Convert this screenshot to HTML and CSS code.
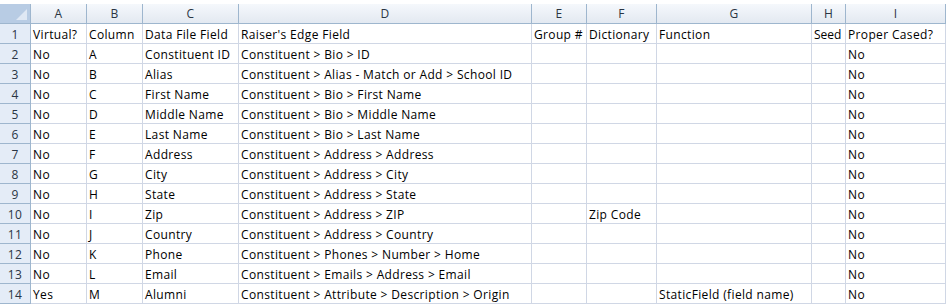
FILE: index.html
```html
<!DOCTYPE html>
<html>
<head>
<meta charset="utf-8">
<link rel="stylesheet" href="styles.css">
</head>
<body>
<div class="sheet">
  <div class="corner"><span class="tri"></span></div>
  <div class="ch">A</div><div class="ch">B</div><div class="ch">C</div><div class="ch">D</div><div class="ch">E</div><div class="ch">F</div><div class="ch">G</div><div class="ch">H</div><div class="ch">I</div>

  <div class="rh">1</div><div class="c">Virtual?</div><div class="c">Column</div><div class="c">Data File Field</div><div class="c">Raiser's Edge Field</div><div class="c">Group #</div><div class="c">Dictionary</div><div class="c">Function</div><div class="c tight">Seed</div><div class="c">Proper Cased?</div>

  <div class="rh">2</div><div class="c">No</div><div class="c">A</div><div class="c">Constituent ID</div><div class="c">Constituent &gt; Bio &gt; ID</div><div class="c"></div><div class="c"></div><div class="c"></div><div class="c"></div><div class="c">No</div>

  <div class="rh">3</div><div class="c">No</div><div class="c">B</div><div class="c">Alias</div><div class="c">Constituent &gt; Alias - Match or Add &gt; School ID</div><div class="c"></div><div class="c"></div><div class="c"></div><div class="c"></div><div class="c">No</div>

  <div class="rh">4</div><div class="c">No</div><div class="c">C</div><div class="c">First Name</div><div class="c">Constituent &gt; Bio &gt; First Name</div><div class="c"></div><div class="c"></div><div class="c"></div><div class="c"></div><div class="c">No</div>

  <div class="rh">5</div><div class="c">No</div><div class="c">D</div><div class="c">Middle Name</div><div class="c">Constituent &gt; Bio &gt; Middle Name</div><div class="c"></div><div class="c"></div><div class="c"></div><div class="c"></div><div class="c">No</div>

  <div class="rh">6</div><div class="c">No</div><div class="c">E</div><div class="c">Last Name</div><div class="c">Constituent &gt; Bio &gt; Last Name</div><div class="c"></div><div class="c"></div><div class="c"></div><div class="c"></div><div class="c">No</div>

  <div class="rh">7</div><div class="c">No</div><div class="c">F</div><div class="c">Address</div><div class="c">Constituent &gt; Address &gt; Address</div><div class="c"></div><div class="c"></div><div class="c"></div><div class="c"></div><div class="c">No</div>

  <div class="rh">8</div><div class="c">No</div><div class="c">G</div><div class="c">City</div><div class="c">Constituent &gt; Address &gt; City</div><div class="c"></div><div class="c"></div><div class="c"></div><div class="c"></div><div class="c">No</div>

  <div class="rh">9</div><div class="c">No</div><div class="c">H</div><div class="c">State</div><div class="c">Constituent &gt; Address &gt; State</div><div class="c"></div><div class="c"></div><div class="c"></div><div class="c"></div><div class="c">No</div>

  <div class="rh">10</div><div class="c">No</div><div class="c">I</div><div class="c">Zip</div><div class="c">Constituent &gt; Address &gt; ZIP</div><div class="c"></div><div class="c">Zip Code</div><div class="c"></div><div class="c"></div><div class="c">No</div>

  <div class="rh">11</div><div class="c">No</div><div class="c">J</div><div class="c">Country</div><div class="c">Constituent &gt; Address &gt; Country</div><div class="c"></div><div class="c"></div><div class="c"></div><div class="c"></div><div class="c">No</div>

  <div class="rh">12</div><div class="c">No</div><div class="c">K</div><div class="c">Phone</div><div class="c">Constituent &gt; Phones &gt; Number &gt; Home</div><div class="c"></div><div class="c"></div><div class="c"></div><div class="c"></div><div class="c">No</div>

  <div class="rh">13</div><div class="c">No</div><div class="c">L</div><div class="c">Email</div><div class="c">Constituent &gt; Emails &gt; Address &gt; Email</div><div class="c"></div><div class="c"></div><div class="c"></div><div class="c"></div><div class="c">No</div>

  <div class="rh">14</div><div class="c">Yes</div><div class="c">M</div><div class="c">Alumni</div><div class="c">Constituent &gt; Attribute &gt; Description &gt; Origin</div><div class="c"></div><div class="c"></div><div class="c">StaticField (field name)</div><div class="c"></div><div class="c">No</div>
</div>
</body>
</html>
```

FILE: styles.css
```css
html, body {
  margin: 0;
  padding: 0;
  background: #ffffff;
}
body {
  padding-top: 4px;
  font-family: "Open Sans", "Liberation Sans", Arial, sans-serif;
  font-size: 12px;
  letter-spacing: 0.35px;
  color: #000;
}
.sheet {
  display: grid;
  grid-template-columns: 31px 56px 56px 96px 293px 55px 70px 155px 34px 100px;
  grid-auto-rows: 20px;
  width: 946px;
}
.sheet > div {
  box-sizing: border-box;
  border-right: 1px solid #d0d7e5;
  border-bottom: 1px solid #d0d7e5;
  white-space: nowrap;
  overflow: hidden;
  line-height: 21px;
}
.sheet > .corner {
  position: relative;
  background: #b8cce4;
  border-right: 1px solid #9eb6ce;
  border-bottom: 1px solid #9eb6ce;
}
.tri {
  position: absolute;
  right: 3px;
  bottom: 3px;
  width: 0;
  height: 0;
  border-left: 11px solid transparent;
  border-bottom: 11px solid #dfe8f4;
}
.sheet > .ch {
  background: linear-gradient(#f5f8fc, #e3e9f1);
  border-right: 1px solid #9eb6ce;
  border-bottom: 1px solid #9eb6ce;
  text-align: center;
  color: #2a3543;
  line-height: 20px;
}
.sheet > .rh {
  background: #e4ecf7;
  border-right: 1px solid #9eb6ce;
  border-bottom: 1px solid #9eb6ce;
  text-align: center;
  color: #2a3543;
}
.sheet > .c {
  padding-left: 2px;
}
.sheet > .tight {
  letter-spacing: 0;
}
```
